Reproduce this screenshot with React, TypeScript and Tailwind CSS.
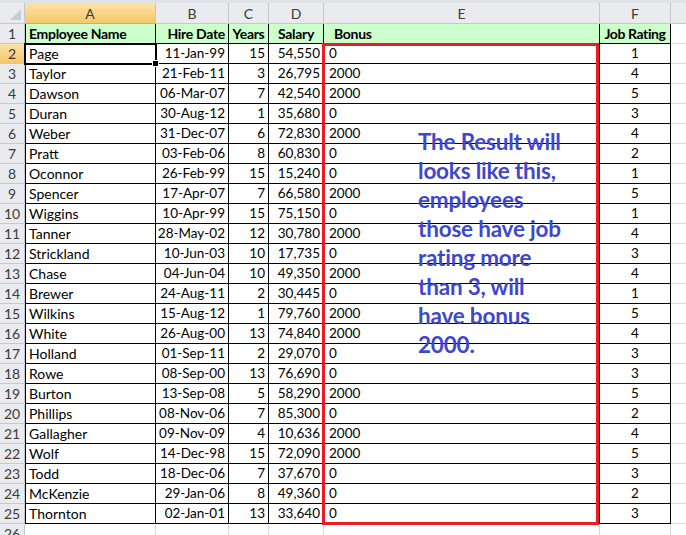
import React from "react";

type Row = [string, string, number, string, string, number];

const data: Row[] = [
  ["Page", "11-Jan-99", 15, "54,550", "0", 1],
  ["Taylor", "21-Feb-11", 3, "26,795", "2000", 4],
  ["Dawson", "06-Mar-07", 7, "42,540", "2000", 5],
  ["Duran", "30-Aug-12", 1, "35,680", "0", 3],
  ["Weber", "31-Dec-07", 6, "72,830", "2000", 4],
  ["Pratt", "03-Feb-06", 8, "60,830", "0", 2],
  ["Oconnor", "26-Feb-99", 15, "15,240", "0", 1],
  ["Spencer", "17-Apr-07", 7, "66,580", "2000", 5],
  ["Wiggins", "10-Apr-99", 15, "75,150", "0", 1],
  ["Tanner", "28-May-02", 12, "30,780", "2000", 4],
  ["Strickland", "10-Jun-03", 10, "17,735", "0", 3],
  ["Chase", "04-Jun-04", 10, "49,350", "2000", 4],
  ["Brewer", "24-Aug-11", 2, "30,445", "0", 1],
  ["Wilkins", "15-Aug-12", 1, "79,760", "2000", 5],
  ["White", "26-Aug-00", 13, "74,840", "2000", 4],
  ["Holland", "01-Sep-11", 2, "29,070", "0", 3],
  ["Rowe", "08-Sep-00", 13, "76,690", "0", 3],
  ["Burton", "13-Sep-08", 5, "58,290", "2000", 5],
  ["Phillips", "08-Nov-06", 7, "85,300", "0", 2],
  ["Gallagher", "09-Nov-09", 4, "10,636", "2000", 4],
  ["Wolf", "14-Dec-98", 15, "72,090", "2000", 5],
  ["Todd", "18-Dec-06", 7, "37,670", "0", 3],
  ["McKenzie", "29-Jan-06", 8, "49,360", "0", 2],
  ["Thornton", "02-Jan-01", 13, "33,640", "0", 3],
];

const rowHdr =
  "w-[25px] shrink-0 h-full flex items-center justify-center border-r border-b border-[#c5c9cf] text-[#3b3b3b]";
const rowHdrNormal = rowHdr + " bg-[#e9ebee]";
const rowHdrSel = rowHdr + " bg-gradient-to-b from-[#fbe3a8] to-[#f4c766] border-r-[#f0a830]";

const cell = "h-full shrink-0 flex items-center px-[3px] whitespace-nowrap overflow-hidden border-r border-b border-black";

export default function App() {
  return (
    <div
      className="relative w-[686px] h-[535px] overflow-hidden bg-white text-[14px] text-black"
      style={{ fontFamily: "Lato, 'Liberation Sans', sans-serif" }}
    >
      {/* top strip */}
      <div className="h-[3px] bg-[#dfe2e6]" />

      {/* column header row */}
      <div className="flex h-[21px] text-[#3b3b3b]">
        <div className="relative w-[25px] shrink-0 h-full bg-[#e9ebee] border-r border-b border-[#c5c9cf]">
          <div className="absolute right-[3px] bottom-[3px] w-0 h-0 border-l-[11px] border-l-transparent border-b-[11px] border-b-[#c9ccd1]" />
        </div>
        <div className="w-[131px] shrink-0 h-full flex items-center justify-center bg-gradient-to-b from-[#fbe3a8] to-[#f4c766] border-r border-[#c5c9cf] border-b border-b-[#f0a830]">
          A
        </div>
        <div className="w-[73px] shrink-0 h-full flex items-center justify-center bg-[#e9ebee] border-r border-b border-[#c5c9cf]">B</div>
        <div className="w-[40px] shrink-0 h-full flex items-center justify-center bg-[#e9ebee] border-r border-b border-[#c5c9cf]">C</div>
        <div className="w-[55px] shrink-0 h-full flex items-center justify-center bg-[#e9ebee] border-r border-b border-[#c5c9cf]">D</div>
        <div className="w-[276px] shrink-0 h-full flex items-center justify-center bg-[#e9ebee] border-r border-b border-[#c5c9cf]">E</div>
        <div className="w-[71px] shrink-0 h-full flex items-center justify-center bg-[#e9ebee] border-r border-b border-[#c5c9cf]">F</div>
        <div className="flex-1 h-full bg-[#e9ebee] border-b border-[#c5c9cf]" />
      </div>

      {/* row 1 */}
      <div className="flex h-[20px]">
        <div className={rowHdrNormal}>1</div>
        <div className={cell + " w-[131px] border-l bg-[#ccffcc] font-bold tracking-[-0.3px]"}>Employee Name</div>
        <div className={cell + " w-[73px] justify-end bg-[#ccffcc] font-bold tracking-[-0.3px]"}>Hire Date</div>
        <div className={cell + " w-[40px] justify-center px-0 bg-[#ccffcc] font-bold tracking-[-0.3px]"}>Years</div>
        <div className={cell + " w-[55px] justify-center bg-[#ccffcc] font-bold tracking-[-0.3px]"}>Salary</div>
        <div className={cell + " w-[276px] pl-[10px] bg-[#ccffcc] font-bold tracking-[-0.3px]"}>Bonus</div>
        <div className={cell + " w-[71px] justify-center px-0 bg-[#ccffcc] font-bold tracking-[-0.4px]"}>Job Rating</div>
        <div className="flex-1 h-full border-b border-[#d9d9d9]" />
      </div>

      {/* data rows */}
      {data.map((r, i) => (
        <div key={i} className="flex h-[20px] text-[13.5px]">
          <div className={(i === 0 ? rowHdrSel : rowHdrNormal) + " text-[14px]"}>{i + 2}</div>
          <div className={cell + " w-[131px] border-l text-[14px]"}>{r[0]}</div>
          <div className={cell + " w-[73px] justify-end"}>{r[1]}</div>
          <div className={cell + " w-[40px] justify-end"}>{r[2]}</div>
          <div className={cell + " w-[55px] justify-end"}>{r[3]}</div>
          <div className={cell + " w-[276px] pl-[5px]"}>{r[4]}</div>
          <div className={cell + " w-[71px] justify-center"}>{r[5]}</div>
          <div className="flex-1 h-full border-b border-[#d9d9d9]" />
        </div>
      ))}

      {/* row 26 */}
      <div className="flex h-[20px]">
        <div className={rowHdrNormal}>26</div>
        <div className="w-[131px] shrink-0 h-full border-r border-[#d9d9d9]" />
        <div className="w-[73px] shrink-0 h-full border-r border-[#d9d9d9]" />
        <div className="w-[40px] shrink-0 h-full border-r border-[#d9d9d9]" />
        <div className="w-[55px] shrink-0 h-full border-r border-[#d9d9d9]" />
        <div className="w-[276px] shrink-0 h-full border-r border-[#d9d9d9]" />
        <div className="w-[71px] shrink-0 h-full border-r border-[#d9d9d9]" />
        <div className="flex-1 h-full" />
      </div>

      {/* selected cell A2 */}
      <div className="absolute left-[24px] top-[43px] w-[133px] h-[22px] border-2 border-black pointer-events-none" />
      <div className="absolute left-[152px] top-[60px] w-[7px] h-[7px] bg-black border border-white pointer-events-none" />

      {/* red highlight rectangle */}
      <div className="absolute left-[322px] top-[43px] w-[277px] h-[482px] border-[3px] border-[#ed1c24] pointer-events-none" />

      {/* annotation text box */}
      <div className="absolute left-[418px] top-[127px] text-[22.5px] leading-[29px] font-bold text-[#3f48cc] whitespace-nowrap tracking-[-0.2px]">
        The Result will
        <br />
        looks like this,
        <br />
        employees
        <br />
        those have job
        <br />
        rating more
        <br />
        than 3, will
        <br />
        have bonus
        <br />
        2000.
      </div>
    </div>
  );
}
